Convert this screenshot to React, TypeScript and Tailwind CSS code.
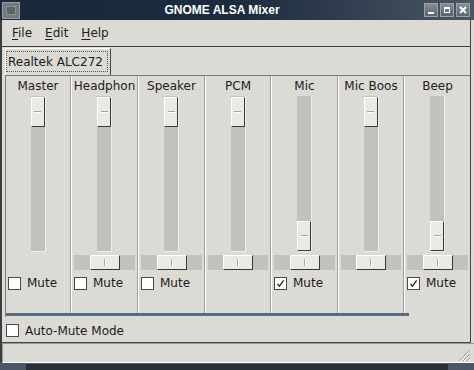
import React from "react";

type Channel = {
  name: string;
  down: boolean;
  balance: boolean;
  mute: boolean | null;
  width: string;
};

const channels: Channel[] = [
  { name: "Master", down: false, balance: false, mute: false, width: "w-[64px]" },
  { name: "Headphon", down: false, balance: true, mute: false, width: "w-[65px]" },
  { name: "Speaker", down: false, balance: true, mute: false, width: "w-[65px]" },
  { name: "PCM", down: false, balance: true, mute: null, width: "w-[64px]" },
  { name: "Mic", down: true, balance: true, mute: true, width: "w-[65px]" },
  { name: "Mic Boos", down: false, balance: true, mute: null, width: "w-[64px]" },
  { name: "Beep", down: true, balance: true, mute: true, width: "flex-1" },
];

const CheckBox = ({ checked }: { checked: boolean }) => (
  <div className="w-[13px] h-[13px] shrink-0 bg-white border border-[#4b4a47] flex items-center justify-center">
    {checked && (
      <svg width="9" height="9" viewBox="0 0 9 9">
        <path d="M1.5 4.8 L3.4 7.2 L7.6 1.4" stroke="#1e1e1e" strokeWidth="1.2" fill="none" />
      </svg>
    )}
  </div>
);

const VThumb = () => (
  <div className="w-full h-[30px] bg-[#ebe9e5] border-t border-l border-white border-r border-b border-r-[#3a3a38] border-b-[#3a3a38] flex items-center justify-center">
    <div className="w-[7px] h-[2px] border-t border-[#a6a49f] border-b border-b-white" />
  </div>
);

const HThumb = () => (
  <div className="w-[30px] h-full bg-[#ebe9e5] border-t border-l border-white border-r border-b border-r-[#3a3a38] border-b-[#3a3a38] flex items-center justify-center">
    <div className="w-[2px] h-[7px] border-l border-[#a6a49f] border-r border-r-white" />
  </div>
);

const Column = ({ ch }: { ch: Channel }) => (
  <div className={`${ch.width} flex flex-col items-center overflow-hidden`}>
    <div className="pt-[3px] leading-[15px] h-[18px] whitespace-nowrap text-center">{ch.name}</div>
    <div
      className={`mt-[2px] w-[15px] h-[156px] bg-[#c3c1bc] border-b border-r border-[#eeede9] flex flex-col pt-[1px] ${
        ch.down ? "justify-end" : "justify-start"
      }`}
    >
      <VThumb />
    </div>
    <div className="mt-[3px] h-[15px] w-full px-[2px]">
      {ch.balance && (
        <div className="h-full bg-[#c3c1bc] flex justify-center">
          <HThumb />
        </div>
      )}
    </div>
    <div className="mt-[7px] h-[13px] w-full pl-[2px] flex items-center gap-[6px]">
      {ch.mute !== null && (
        <>
          <CheckBox checked={ch.mute} />
          <span className="leading-[13px]">Mute</span>
        </>
      )}
    </div>
  </div>
);

const Separator = () => (
  <div className="w-[2px] self-stretch flex">
    <div className="w-[1px] bg-[#a19f9a]" />
    <div className="w-[1px] bg-white" />
  </div>
);

const TitleButton = ({ kind }: { kind: "min" | "max" | "close" }) => (
  <div className="w-[14px] h-[14px] bg-linear-to-b from-[#858d96] to-[#5c646e] border border-[#9aa1a8] flex items-center justify-center">
    {kind === "min" && <div className="w-[6px] h-[2px] bg-white mt-[5px]" />}
    {kind === "max" && <div className="w-[6px] h-[6px] border border-white border-t-2" />}
    {kind === "close" && (
      <svg width="8" height="8" viewBox="0 0 8 8">
        <path d="M1 1 L7 7 M7 1 L1 7" stroke="white" strokeWidth="2" />
      </svg>
    )}
  </div>
);

export default function App() {
  return (
    <div className="w-[474px] h-[370px] overflow-hidden flex flex-col bg-[#dcdad5] text-[#1c1c1c] text-[12px] font-['DejaVu_Sans',sans-serif]">
      {/* title bar */}
      <div className="h-[20px] shrink-0 flex items-center bg-linear-to-r from-[#1a283b] via-[#1c2b3f] to-[#4a5663]">
        <div className="ml-[2px] w-[18px] h-[17px] bg-[#76797c] border border-[#9a9d9f] flex items-center justify-center">
          <div className="w-[10px] h-[9px] bg-[#5d6064] border border-[#8c8f92]" />
        </div>
        <div className="flex-1 text-center text-white font-bold text-[12px] font-['Liberation_Sans',sans-serif]">
          GNOME ALSA Mixer
        </div>
        <div className="flex gap-[2px] mr-[4px]">
          <TitleButton kind="min" />
          <TitleButton kind="max" />
          <TitleButton kind="close" />
        </div>
      </div>

      <div className="flex-1 flex flex-col border-l-2 border-[#3b3e42]">
        {/* menu bar */}
        <div className="h-[27px] shrink-0 mr-[3px] border-b border-r border-[#45443f] flex items-center pl-[10px] gap-[13px]">
          <span>
            <span className="underline underline-offset-[2px]">F</span>ile
          </span>
          <span>
            <span className="underline underline-offset-[2px]">E</span>dit
          </span>
          <span>
            <span className="underline underline-offset-[2px]">H</span>elp
          </span>
        </div>

        {/* main frame */}
        <div className="h-[296px] shrink-0 mr-[3px] border-r border-b border-[#45443f] flex flex-col pt-[1px]">
          <div className="h-[27px] pl-[3px] flex">
            <div className="w-[106px] border-t border-l border-white border-r border-r-[#45443f] pt-[2px] pl-[0px] pr-[2px]">
              <div className="h-[21px] border border-dotted border-[#555] flex items-center pl-[1px] whitespace-nowrap">
                Realtek ALC272
              </div>
            </div>
          </div>
          <div className="h-[242px] ml-[3px] border-t border-l border-[#7d7c78] flex flex-col">
            <div className="h-[237px] flex">
              {channels.map((ch, i) => (
                <React.Fragment key={ch.name}>
                  <Column ch={ch} />
                  {i < channels.length - 1 && <Separator />}
                </React.Fragment>
              ))}
            </div>
            <div className="h-[3px] w-[403px] bg-[#566a80]" />
          </div>
          <div className="h-[25px] pt-[2px] pl-[4px] flex items-center gap-[6px]">
            <CheckBox checked={false} />
            <span>Auto-Mute Mode</span>
          </div>
        </div>

        {/* status bar */}
        <div className="h-[20px] shrink-0 border-l border-t border-[#9a9893] border-b border-b-white flex justify-end items-end">
          <svg width="15" height="15" viewBox="0 0 15 15" className="mr-[3px]">
            <path d="M14 3 L3 14 M14 7 L7 14 M14 11 L11 14" stroke="#9a9893" strokeWidth="1" />
            <path d="M14 4 L4 14 M14 8 L8 14 M14 12 L12 14" stroke="#ffffff" strokeWidth="1" />
          </svg>
        </div>
      </div>

      {/* bottom frame */}
      <div className="h-[7px] shrink-0 flex bg-[#2a3038]">
        <div className="w-[26px] bg-[#4a5868]" />
        <div className="flex-1 border-t border-[#5a626c]" />
        <div className="w-[26px] bg-[#4a5868]" />
      </div>
    </div>
  );
}
